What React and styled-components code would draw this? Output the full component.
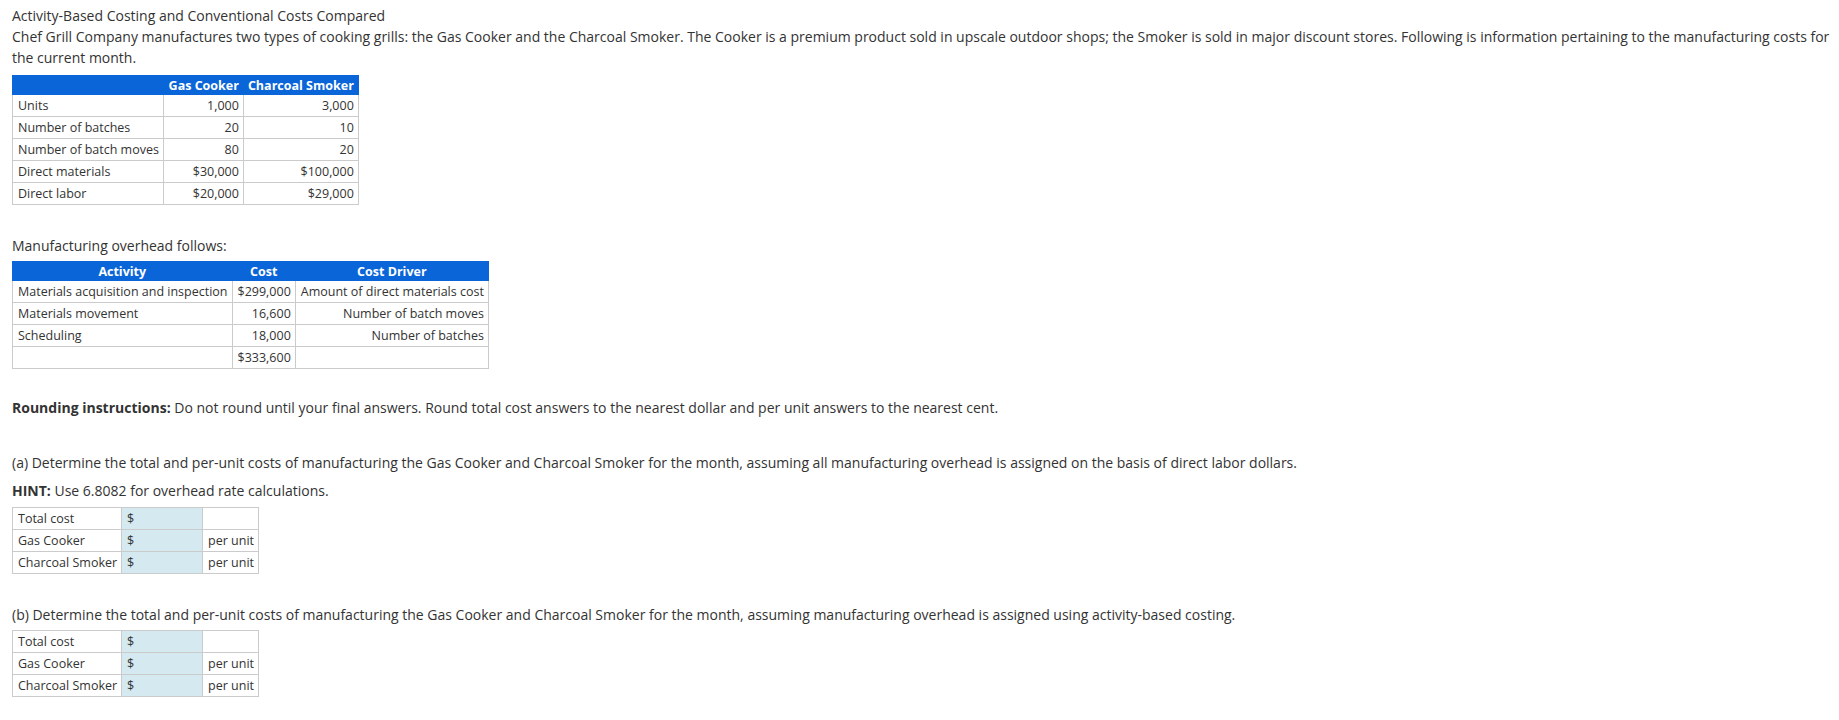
import React from "react";
import styled, { createGlobalStyle } from "styled-components";

const Global = createGlobalStyle`
  html, body { margin: 0; padding: 0; background: #fff; }
  body { font-family: "Open Sans", "Noto Sans", sans-serif; }
`;

const Page = styled.div`
  padding: 5px 4px 20px 12px;
  font-family: "Open Sans", "Noto Sans", sans-serif;
  font-size: 14px;
  line-height: 21px;
  color: #333;
`;

const Title = styled.div`
  font-size: 14px;
`;

const Para = styled.p`
  margin: ${(p) => p.$mt || 0}px 0 0 0;
`;

const Strong = styled.strong`
  font-weight: 700;
`;

const DataTable = styled.table`
  border-collapse: collapse;
  margin-top: ${(p) => p.$mt || 0}px;
  font-size: 12.5px;
  line-height: 17px;
  color: #333;
  table-layout: fixed;
`;

const HeadCell = styled.th`
  background: #0a65d8;
  color: #fff;
  font-weight: 700;
  padding: 1px 4px 0 4px;
  line-height: 17px;
  border: 1px solid #0a65d8;
  text-align: ${(p) => p.$align || "center"};
  white-space: nowrap;
`;

const Cell = styled.td`
  border: 1px solid #cbcbcb;
  padding: 2px 4px 2px 5px;
  text-align: ${(p) => p.$align || "left"};
  white-space: nowrap;
  background: ${(p) => (p.$input ? "#d5e9f0" : "#fff")};
`;

const products = [
  ["Units", "1,000", "3,000"],
  ["Number of batches", "20", "10"],
  ["Number of batch moves", "80", "20"],
  ["Direct materials", "$30,000", "$100,000"],
  ["Direct labor", "$20,000", "$29,000"],
];

const overhead = [
  ["Materials acquisition and inspection", "$299,000", "Amount of direct materials cost"],
  ["Materials movement", "16,600", "Number of batch moves"],
  ["Scheduling", "18,000", "Number of batches"],
  ["", "$333,600", ""],
];

const answers = [
  ["Total cost", ""],
  ["Gas Cooker", "per unit"],
  ["Charcoal Smoker", "per unit"],
];

function AnswerTable({ mt }) {
  return (
    <DataTable $mt={mt}>
      <colgroup>
        <col style={{ width: 108 }} />
        <col style={{ width: 81 }} />
        <col style={{ width: 54 }} />
      </colgroup>
      <tbody>
        {answers.map(([label, unit]) => (
          <tr key={label}>
            <Cell>{label}</Cell>
            <Cell $input>$</Cell>
            <Cell>{unit}</Cell>
          </tr>
        ))}
      </tbody>
    </DataTable>
  );
}

export default function App() {
  return (
    <Page>
      <Global />
      <Title>Activity-Based Costing and Conventional Costs Compared</Title>
      <Para>
        Chef Grill Company manufactures two types of cooking grills: the Gas Cooker and the Charcoal
        Smoker. The Cooker is a premium product sold in upscale outdoor shops; the Smoker is sold in
        major discount stores. Following is information pertaining to the manufacturing costs for
        the current month.
      </Para>

      <DataTable $mt={7}>
        <colgroup>
          <col style={{ width: 149 }} />
          <col style={{ width: 80 }} />
          <col style={{ width: 111 }} />
        </colgroup>
        <thead>
          <tr>
            <HeadCell />
            <HeadCell $align="right">Gas Cooker</HeadCell>
            <HeadCell $align="right">Charcoal Smoker</HeadCell>
          </tr>
        </thead>
        <tbody>
          {products.map(([a, b, c]) => (
            <tr key={a}>
              <Cell>{a}</Cell>
              <Cell $align="right">{b}</Cell>
              <Cell $align="right">{c}</Cell>
            </tr>
          ))}
        </tbody>
      </DataTable>

      <Para $mt={30}>Manufacturing overhead follows:</Para>

      <DataTable $mt={5}>
        <colgroup>
          <col style={{ width: 219 }} />
          <col style={{ width: 61 }} />
          <col style={{ width: 186 }} />
        </colgroup>
        <thead>
          <tr>
            <HeadCell>Activity</HeadCell>
            <HeadCell>Cost</HeadCell>
            <HeadCell>Cost Driver</HeadCell>
          </tr>
        </thead>
        <tbody>
          {overhead.map(([a, b, c], i) => (
            <tr key={i}>
              <Cell>{a}</Cell>
              <Cell $align="right">{b}</Cell>
              <Cell $align="right">{c}</Cell>
            </tr>
          ))}
        </tbody>
      </DataTable>

      <Para $mt={28}>
        <Strong>Rounding instructions:</Strong> Do not round until your final answers. Round total
        cost answers to the nearest dollar and per unit answers to the nearest cent.
      </Para>

      <Para $mt={34}>
        (a) Determine the total and per-unit costs of manufacturing the Gas Cooker and Charcoal
        Smoker for the month, assuming all manufacturing overhead is assigned on the basis of direct
        labor dollars.
      </Para>
      <Para $mt={7}>
        <Strong>HINT:</Strong> Use 6.8082 for overhead rate calculations.
      </Para>

      <AnswerTable mt={6} />

      <Para $mt={30}>
        (b) Determine the total and per-unit costs of manufacturing the Gas Cooker and Charcoal
        Smoker for the month, assuming manufacturing overhead is assigned using activity-based
        costing.
      </Para>

      <AnswerTable mt={5} />
    </Page>
  );
}
